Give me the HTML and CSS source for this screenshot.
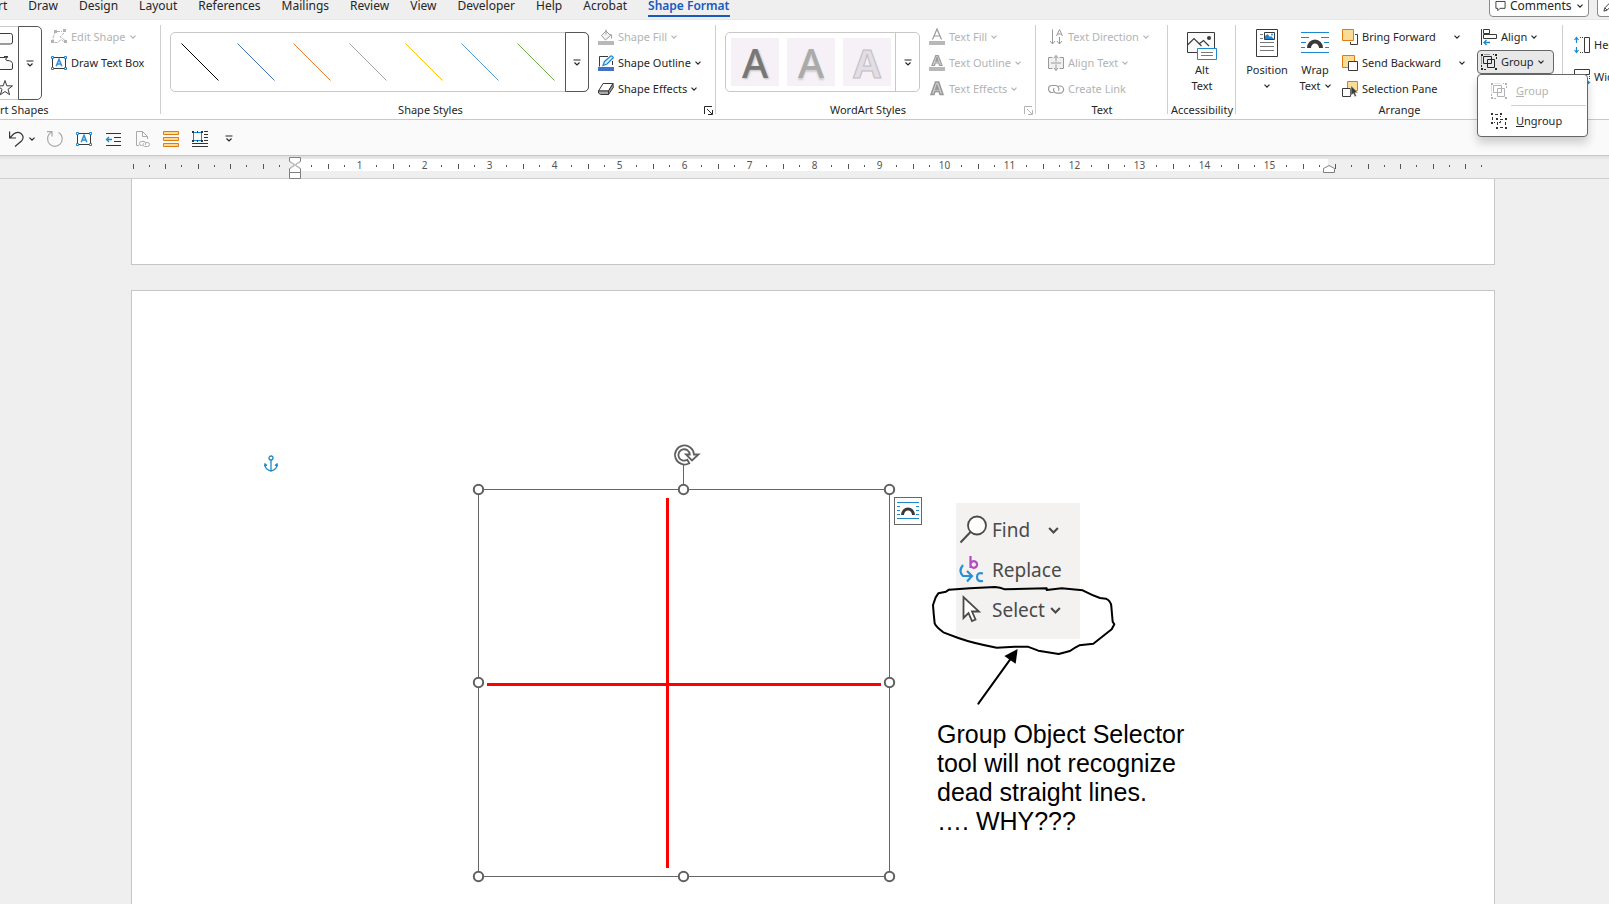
FILE: index.html
```
<!DOCTYPE html>
<html lang="en">
<head>
<meta charset="utf-8">
<title>Shape Format</title>
<link rel="stylesheet" href="styles.css">
</head>
<body>
<svg class="defs" aria-hidden="true">
  <symbol id="chev" viewBox="0 0 6 4"><path d="M.5.6 3 3.1 5.500.6" fill="none" stroke="currentColor" stroke-width="1.2"/></symbol>
  <symbol id="more" viewBox="0 0 8 7"><path d="M.5 1h7M1.500 3.500 4 6l2.500-2.500" fill="none" stroke="currentColor" stroke-width="1.2"/></symbol>
  <symbol id="launch" viewBox="0 0 9 9"><path d="M.5 8V.5H8M3 3l5 5M8.500 4v4.500H4" fill="none" stroke="currentColor"/></symbol>
  <symbol id="textbox" viewBox="0 0 16 16">
    <path d="M1.500 2.500h13v11h-13z" fill="#fff" stroke="#3b3b3b"/>
    <path d="M5.200 11.300 8 4.200l2.800 7.100M6.200 9h3.600" fill="none" stroke="#2b8fd3" stroke-width="1.5"/>
    <path d="M.5 1.500h2v2h-2zM13.500 1.500h2v2h-2zM.5 12.500h2v2h-2zM13.500 12.500h2v2h-2z" fill="#fff" stroke="#1f86cc"/>
  </symbol>
  <symbol id="wrap" viewBox="0 0 28 22">
    <path d="M0 .5h28M0 5.500h8M20 5.500h8M0 10.500h5M23 10.500h5M0 15.500h4M24 15.500h4M0 20.500h28" stroke="#1e88cf" fill="none"/>
    <path d="M8 16a6 6.500 0 0 1 12 0" fill="none" stroke="#3a3a3a" stroke-width="4"/>
  </symbol>
  <symbol id="corners" viewBox="0 0 16 16">
    <path d="M0 0h2v2H0zM14 0h2v2h-2zM0 14h2v2H0zM14 14h2v2h-2zM12 0h1v1h-1zM15 3h1v2h-1zM0 11h1v2H0zM3 15h2v1H3z" fill="currentColor"/>
    <path d="M2.500 2.500h8v7h-8zM6.500 5.500h7v8h-7z" fill="none" stroke="currentColor"/>
    <path d="M.5 2v8M3 .5h6" stroke="currentColor" stroke-opacity=".4"/>
  </symbol>
</svg>

<header class="tabs">
  <nav class="tab-list" aria-label="Ribbon tabs">
    <a class="tab" href="#">rt</a>
    <a class="tab" href="#">Draw</a>
    <a class="tab" href="#">Design</a>
    <a class="tab" href="#">Layout</a>
    <a class="tab" href="#">References</a>
    <a class="tab" href="#">Mailings</a>
    <a class="tab" href="#">Review</a>
    <a class="tab" href="#">View</a>
    <a class="tab" href="#">Developer</a>
    <a class="tab" href="#">Help</a>
    <a class="tab" href="#">Acrobat</a>
    <a class="tab active" href="#">Shape Format</a>
  </nav>
  <button class="pill"><svg class="i12" viewBox="0 0 12 12"><path d="M1 .5h10v7.500H5.500L3 10.500V8H1z" fill="#fff" stroke="#333"/></svg>Comments<svg class="chev end"><use href="#chev"/></svg></button>
  <button class="pill clipped" aria-label="Editing"><svg class="i12" viewBox="0 0 12 12"><path d="M1 11l1-3.500L9 .5l2.500 2.500-7 7z M2 7.500 4.500 10" fill="#fff" stroke="#333"/></svg></button>
</header>

<section class="ribbon">
  <div class="group g-insert">
    <div class="body">
      <div class="shapes">
        <svg class="shape-strip" viewBox="0 0 18 74"><path d="M0 .5h18M0 73.500h18" stroke="#c8c8c8"/><g fill="#fafafa" stroke="#3a3a3a"><path d="M-3 7.500H10.500a2 2 0 0 1 2 2V16a2 2 0 0 1-2 2H-3"/><path d="M-2 31.500H5.500q2 0 2.500-1H4M8 30.500q-4 3-1 4 5 0 5.500 3v4.500a1.500 1.500 0 0 1-1.500 1.500H0"/><path d="M5 54.500l1.800 5.300 5.700.1-4.500 3.400 1.600 5.400L5 65.500.4 68.700 2 63.300-2.500 59.900l5.700-.1z"/></g></svg>
        <button class="more dark" aria-label="More shapes"><svg class="dd"><use href="#more"/></svg></button>
      </div>
      <div class="cmds">
        <button class="cmd" disabled><svg class="i16" viewBox="0 0 16 16" fill="none" stroke="currentColor"><path d="M2 13V11q0-4 2.500-8M6 2.500h5M13 4l-4 4q5 2 5 5M3.500 13.500h3l4-3 3 3" stroke-dasharray="3 1"/><path d="M3 1h3v3H3zM12 0h3v3h-3zM0 11h3v3H0zM13 11h3v3h-3z" fill="currentColor" stroke="none"/></svg>Edit Shape<svg class="chev"><use href="#chev"/></svg></button>
        <button class="cmd"><svg class="i16"><use href="#textbox"/></svg>Draw Text Box</button>
      </div>
    </div>
    <div class="label start">rt Shapes</div>
  </div>

  <div class="group g-styles">
    <div class="body">
      <div class="gallery">
        <button class="style" aria-label="Black line"><svg viewBox="0 0 38 38"><path d="M.5.500l37 37" stroke="#000"/></svg></button>
        <button class="style" aria-label="Blue line"><svg viewBox="0 0 38 38"><path d="M.5.500l37 37" stroke="#4472c4"/></svg></button>
        <button class="style" aria-label="Orange line"><svg viewBox="0 0 38 38"><path d="M.5.500l37 37" stroke="#ed7d31"/></svg></button>
        <button class="style" aria-label="Grey line"><svg viewBox="0 0 38 38"><path d="M.5.500l37 37" stroke="#a5a5a5"/></svg></button>
        <button class="style" aria-label="Gold line"><svg viewBox="0 0 38 38"><path d="M.5.500l37 37" stroke="#ffc000"/></svg></button>
        <button class="style" aria-label="Light blue line"><svg viewBox="0 0 38 38"><path d="M.5.500l37 37" stroke="#5b9bd5"/></svg></button>
        <button class="style" aria-label="Green line"><svg viewBox="0 0 38 38"><path d="M.5.500l37 37" stroke="#70ad47"/></svg></button>
        <button class="more dark" aria-label="More shape styles"><svg class="dd"><use href="#more"/></svg></button>
      </div>
      <div class="cmds">
        <button class="cmd" disabled><svg class="i16" viewBox="0 0 16 16"><path d="M3.500 6.500 8 2l4.500 4.500-5 4.500zM8 .5v5M12 5.500q2-1.500 1.500 4" fill="#f3f3f3" stroke="#9a9a9a"/><path d="M0 12h16v4H0z" fill="#b8b8b8"/></svg>Shape Fill<svg class="chev"><use href="#chev"/></svg></button>
        <button class="cmd"><svg class="i16" viewBox="0 0 16 16"><path d="M10 1.500H1.500v10M14.500 6v4" fill="none" stroke="#3a3a3a"/><path d="M5 10.500 6.500 6.500 13 .8q2 0 2.300 2L9 9z" fill="#d9effc" stroke="#1e88cf" stroke-width="1.3"/><path d="M0 12h16v4H0z" fill="#4472c4"/></svg>Shape Outline<svg class="chev"><use href="#chev"/></svg></button>
        <button class="cmd"><svg class="i16" viewBox="0 0 16 16" stroke="#3a3a3a" stroke-linejoin="round"><path d="M5 2.500h10l-4.500 7.500H.5z" fill="#fff"/><path d="M.5 10h10v3.500H2.500L.5 12z" fill="#aaa"/><path d="M10.500 10 15 2.500l.3 4-4.800 7z" fill="#999"/></svg>Shape Effects<svg class="chev"><use href="#chev"/></svg></button>
      </div>
    </div>
    <div class="label has-launch">Shape Styles<button class="launch" aria-label="Shape style settings"><svg><use href="#launch"/></svg></button></div>
  </div>

  <div class="group g-wordart">
    <div class="body">
      <div class="gallery art">
        <button class="letter one">A</button>
        <button class="letter two">A</button>
        <button class="letter three">A</button>
        <button class="more" aria-label="More WordArt styles"><svg class="dd"><use href="#more"/></svg></button>
      </div>
      <div class="cmds">
        <button class="cmd" disabled><svg class="i16" viewBox="0 0 16 16"><path d="M3.500 10.500 8 0l4.500 10.500M5 7h6" fill="none" stroke="#999" stroke-width="1.2"/><path d="M0 12h16v4H0z" fill="#b8b8b8"/></svg>Text Fill<svg class="chev"><use href="#chev"/></svg></button>
        <button class="cmd" disabled><svg class="i16" viewBox="0 0 16 16"><path d="M3 10.500 6.800.5h2.400l3.800 10h-2.500L9.800 8H6.200l-.7 2.500zM6.800 6.200 8 2.500l1.200 3.700z" fill="#ddd" stroke="#999" stroke-width="1.2"/><path d="M0 12h16v4H0z" fill="#b8b8b8"/></svg>Text Outline<svg class="chev"><use href="#chev"/></svg></button>
        <button class="cmd" disabled><svg class="i16" viewBox="0 0 16 16"><path d="M2 13.500 6.500 1h3.200l4.300 12.500h-3l-1-3H6l-1 3zM6.800 8.200 8 4.500l1.300 3.700z" fill="#ccc" stroke="#999" stroke-width="1.500"/></svg>Text Effects<svg class="chev"><use href="#chev"/></svg></button>
      </div>
    </div>
    <div class="label has-launch">WordArt Styles<button class="launch" disabled aria-label="Text effect settings"><svg><use href="#launch"/></svg></button></div>
  </div>

  <div class="group g-text">
    <div class="body">
      <div class="cmds">
        <button class="cmd" disabled><svg class="i16" viewBox="0 0 16 16" fill="none" stroke="#999"><path d="M4.500.5v14M2 12l2.500 3L7 12M11.500 8v7M9 12l2.500 3 2.500-3M8.500 7l3-6.500 3 6.500M9.500 5h4"/></svg>Text Direction<svg class="chev"><use href="#chev"/></svg></button>
        <button class="cmd" disabled><svg class="i16" viewBox="0 0 16 16" fill="none" stroke="#999"><path d="M1 2.500h14v11H1z" fill="#f0f0f0" stroke="none"/><path d="M4.500 2.500h-4v11h4M11.500 2.500h4v11h-4M3 8h10M8 .5v6M6 3l2-2.500L10 3M8 9.500v6M6 13l2 2.500 2-2.500"/></svg>Align Text<svg class="chev"><use href="#chev"/></svg></button>
        <button class="cmd" disabled><svg class="i16" viewBox="0 0 16 16" fill="none" stroke="#999" stroke-width="1.200"><path d="M5.500 11.500H4a3.500 3.500 0 0 1 0-7h3.500a3.500 3.500 0 0 1 3 5.200M10.500 5h1.500a3.600 3.600 0 0 1 0 7.200H9a3.500 3.500 0 0 1-3-5.200"/></svg>Create Link</button>
      </div>
    </div>
    <div class="label">Text</div>
  </div>

  <div class="group g-access">
    <div class="body">
      <button class="big"><svg class="i30" viewBox="0 0 30 28"><path d="M.5.500h27v20H.5z" fill="#fafafa" stroke="#3a3a3a"/><path d="M.5 13 7 6.500l7.500 7.500M12 12l4.500-3.500L22 14" fill="none" stroke="#3a3a3a" stroke-width="1.2"/><circle cx="22" cy="6" r="2" fill="#3a3a3a"/><path d="M10.500 16.500h19v11h-19z" fill="#fff" stroke="#1e88cf"/><path d="M14 20.500h12M14 23.500h12" stroke="#777"/></svg><span>Alt</span><span>Text</span></button>
    </div>
    <div class="label">Accessibility</div>
  </div>

  <div class="group g-arrange">
    <div class="body">
      <button class="big"><svg class="i30" viewBox="0 0 30 28"><path d="M4.500.500h21v27h-21z" fill="#fff" stroke="#3a3a3a"/><path d="M8 5.500h3M8 9.500h3M8 13.500h14M8 17.500h14M8 21.500h14" stroke="#777"/><path d="M12.500 3.500h10v7h-10z" fill="#fff" stroke="#3a3a3a"/><path d="M13 10V7l2.500-2 2.500 3 1-1 3 3z" fill="#1e88cf"/><circle cx="20" cy="5.500" r="1" fill="#1e88cf"/></svg><span>Position</span><span><svg class="chev"><use href="#chev"/></svg></span></button>
      <button class="big"><svg class="i30" viewBox="-1 -3 30 28"><use href="#wrap" width="28" height="22"/></svg><span>Wrap</span><span>Text<svg class="chev"><use href="#chev"/></svg></span></button>
      <div class="cmds wide">
        <button class="cmd split"><svg class="i16" viewBox="0 0 16 16"><path d="M.5.500h11v11H.5z" fill="#fadc95" stroke="#e07b12"/><path d="M13 5.500h2.500v10h-7V13" fill="none" stroke="#3a3a3a"/></svg>Bring Forward<svg class="chev"><use href="#chev"/></svg></button>
        <button class="cmd split"><svg class="i16" viewBox="0 0 16 16"><path d="M.5.500h12v12H.5z" fill="#fadc95" stroke="#e07b12"/><path d="M6.500 6.500h9v9h-9z" fill="#fff" stroke="#3a3a3a"/></svg>Send Backward<svg class="chev"><use href="#chev"/></svg></button>
        <button class="cmd"><svg class="i16" viewBox="0 0 16 16"><path d="M5.500.500h10v9h-10z" fill="#fadc95" stroke="#e07b12"/><path d="M.5 7.500h8v8h-8z" fill="#fff" stroke="#3a3a3a"/><path d="M9 4.500v10l2.300-2 1.500 3.200 1.700-.8-1.500-3.100h3z" fill="#3a3a3a" stroke="#fff" stroke-width=".5"/></svg>Selection Pane</button>
      </div>
      <div class="cmds align">
        <button class="cmd inset"><svg class="i16" viewBox="0 0 16 16" fill="none" stroke="#3a3a3a"><path d="M.5 0v16M2.500.500h6v4h-6zM2.500 5.500h13v4h-13z" /><path d="M9 13.500H3M5.500 11 3 13.500 5.500 16" stroke="#1e88cf" stroke-width="1.300"/></svg>Align<svg class="chev"><use href="#chev"/></svg></button>
        <div class="menu-host">
          <button class="cmd inset open" aria-haspopup="menu" aria-expanded="true"><svg class="i16"><use href="#corners"/></svg>Group<svg class="chev"><use href="#chev"/></svg></button>
          <div class="menu" role="menu">
            <button class="item" role="menuitem" disabled><svg class="i16"><use href="#corners"/></svg><span><u>G</u>roup</span></button>
            <hr>
            <button class="item" role="menuitem"><svg class="i16" viewBox="0 0 16 16"><path d="M0 0h2v2H0zM9 0h2v2H9zM0 9h2v2H0zM5 5h2v2H5zM14 5h2v2h-2zM5 14h2v2H5zM14 14h2v2h-2z" fill="#333"/><path d="M4 1.500h3M1.500 4v3M9.500 3v1M3 9.500h1M9 6.500h3M6.500 9v3M9 14.500h3M14.500 9v3M8 9.500h1.500V8" fill="none" stroke="#333"/></svg><span><u>U</u>ngroup</span></button>
          </div>
        </div>
      </div>
    </div>
    <div class="label">Arrange</div>
  </div>

  <div class="group g-size">
    <div class="size-rows">
      <label class="size"><svg class="i16" viewBox="0 0 16 16" fill="none"><path d="M2.500 1v5M2.500 10v5M.5 3l2-2.500 2 2.500M.5 13l2 2.500 2-2.500" stroke="#1e88cf" stroke-width="1.200"/><path d="M6 .5h3M6 15.500h3" stroke="#3a3a3a" stroke-dasharray="1 1"/><path d="M10.500.500h5v15h-5z" stroke="#3a3a3a"/></svg>Height</label>
      <label class="size"><svg class="i16" viewBox="0 0 16 16" fill="none"><path d="M.5.500h15v5H.5z" stroke="#3a3a3a"/><path d="M.5 7v3M15.500 7v3" stroke="#3a3a3a" stroke-dasharray="1 1"/><path d="M1 13.500h14M3 11.500.5 13.500l2.500 2M13 11.500l2.500 2-2.500 2" stroke="#1e88cf" stroke-width="1.200"/></svg>Width</label>
    </div>
  </div>
</section>

<div class="qat">
  <button class="tool undo" aria-label="Undo"><svg class="i16" viewBox="0 0 16 16" fill="none" stroke="#333" stroke-width="1.200"><path d="M.6.500v6.500H7M1 6.800 4.500 3q4-3 7.500-.5 4 3.500.5 7.500L6 15.500"/></svg><svg class="chev"><use href="#chev"/></svg></button>
  <button class="tool" disabled aria-label="Redo"><svg class="i16" viewBox="0 0 16 16" fill="none" stroke="#a8a8a8" stroke-width="1.200"><path d="M0 .6h5v5M5 1Q.6 3 .6 8a7.300 7.300 0 0 0 14.600 0q0-4.500-3.700-6.500"/></svg></button>
  <button class="tool" aria-label="Draw text box"><svg class="i16"><use href="#textbox"/></svg></button>
  <button class="tool" aria-label="Decrease indent"><svg class="i16" viewBox="0 0 16 16" fill="none"><path d="M1 2.500h15M9 6.500h7M9 10.500h7M1 14.500h15" stroke="#333" stroke-width="1.200"/><path d="M7 8.500H1.500M4 6 1.500 8.500 4 11" stroke="#1e88cf" stroke-width="1.300"/></svg></button>
  <button class="tool" disabled aria-label="Link document"><svg class="i16" viewBox="0 0 16 16" fill="none" stroke="#aaa"><path d="M5 14.500H2.500v-14h6l5 5V8M8.500.500v5h5"/><path d="M8.500 14.500H7.500a2 2 0 0 1 0-4h2.500a2 2 0 0 1 1 3.500M11.500 11.500h2a2 2 0 0 1 0 4h-3a2 2 0 0 1-1-3.200"/></svg></button>
  <button class="tool" aria-label="Paragraph spacing"><svg class="i16" viewBox="0 0 16 16"><path d="M.5.500h15v3H.5zM.5 6.500h15v3H.5zM.5 12.500h15v3H.5z" fill="#fadc95" stroke="#e07b12"/></svg></button>
  <button class="tool" aria-label="Wrap square"><svg class="i16" viewBox="0 0 16 16" fill="none"><path d="M12 .5h4M12 3.500h4M12 6.500h4M12 9.500h4M0 12.500h16M0 15.500h16" stroke="#333" stroke-width="1.200"/><path d="M1.500 1.500h8v8h-8z" stroke="#1e88cf"/><path d="M0 0h2v2H0zM9 0h2v2H9zM0 9h2v2H0zM9 9h2v2H9zM5 0h1v2H5zM5 9h1v2H5z" fill="#333"/></svg></button>
  <button class="tool customize" aria-label="Customize toolbar"><svg class="dd"><use href="#more"/></svg></button>
</div>

<div class="ruler">
  <div class="ruler-white"></div>
  <div class="scale">
    <i></i><i></i><i class="half"></i><span>1</span><span>2</span><span>3</span><span>4</span><span>5</span><span>6</span><span>7</span><span>8</span><span>9</span><span>10</span><span>11</span><span>12</span><span>13</span><span>14</span><span>15</span><i></i><i></i><i></i>
  </div>
  <svg class="indent-left" viewBox="0 0 12 22"><path d="M.5.500h11v4L6 8 .5 4.500z" fill="#fff" stroke="#808080"/><path d="M.5 15.500v-4L6 8l5.500 3.500v4zM.5 15.500h11v6H.5z" fill="#fff" stroke="#808080"/><path d="M1 4.500 11 11.500M11 4.500 1 11.500" stroke="#c4c4c4" stroke-width="1.300"/></svg>
  <svg class="indent-right" viewBox="0 0 12 8"><path d="M.5 7.500v-4L6 .5l5.500 3v4z" fill="#fff" stroke="#808080"/></svg>
</div>

<main class="workspace">
  <div class="page previous"></div>
  <div class="page current">
    <svg class="anchor" viewBox="0 0 14 18" fill="none" stroke="#1f8acb" stroke-width="1.300"><circle cx="7" cy="3" r="2"/><path d="M7 5v11M1 9.500q0 5 6 6.500 6-1.500 6-6.500M.5 11.500 1 9l2 1.500M13.500 11.500 13 9l-2 1.500"/></svg>

    <svg class="selection" viewBox="466 440 436 450">
      <path d="M478.500 489.500h411v387h-411zM683.500 489.500v-26" fill="none" stroke="#666"/>
      <path d="M667.500 498v370M487 684.500h394" stroke="#f00" stroke-width="3" fill="none"/>
      <g fill="#fff" stroke="#606060" stroke-width="2"><circle cx="478.500" cy="489.500" r="4.700"/><circle cx="683.500" cy="489.500" r="4.700"/><circle cx="889.500" cy="489.500" r="4.700"/><circle cx="478.500" cy="682.500" r="4.700"/><circle cx="889.500" cy="682.500" r="4.700"/><circle cx="478.500" cy="876.500" r="4.700"/><circle cx="683.500" cy="876.500" r="4.700"/><circle cx="889.500" cy="876.500" r="4.700"/></g>
      <path d="M694 454.500a9.500 9.500 0 1 0-4.700 8.700l-2-3.500a5.700 5.700 0 1 1 2.500-5.200h-3.800l6 6 6.500-6z" fill="#fff" stroke="#606060" stroke-width="1.800"/>
    </svg>

    <button class="layout-options" aria-label="Layout options"><svg viewBox="0 0 22 18"><path d="M0 .5h22M0 4.500h3M19 4.500h3M0 8.500h3M19 8.500h3M0 12.500h3M19 12.500h3M0 16.500h22" stroke="#1e88cf" fill="none"/><path d="M5.500 13a5.500 6 0 0 1 11 0" fill="none" stroke="#3a3a3a" stroke-width="3"/></svg></button>

    <div class="clip">
      <div class="clip-row"><svg class="i28" viewBox="0 0 28 28"><circle cx="18" cy="9.500" r="9" fill="#fff" stroke="#4a4a4a" stroke-width="1.800"/><path d="M11.500 16 1.500 26.500" stroke="#4a4a4a" stroke-width="2"/></svg><span>Find</span><svg class="chev large gap"><use href="#chev"/></svg></div>
      <div class="clip-row"><svg class="i28" viewBox="0 0 28 28"><g fill="none" stroke-width="2.200"><path d="M11.500 0v12M11.500 8a3.300 3.300 0 1 1 0 1" stroke="#b44bc0"/><path d="M24 17.500q-6-1.500-6 3.500t6 4" stroke="#2b8fd3"/><path d="M4 9q-5 6 0 11h8M8 15l5 5-5 5.500" stroke="#2b8fd3"/></g></svg><span>Replace</span></div>
      <div class="clip-row"><svg class="i28" viewBox="0 0 28 28"><path d="M4.500 1v21l5-5 3.500 8 3.500-1.500-3.500-8h7z" fill="#fff" stroke="#4a4a4a" stroke-width="1.800"/></svg><span>Select</span><svg class="chev large"><use href="#chev"/></svg></div>
    </div>

    <svg class="ink" viewBox="0 0 960 720" fill="none" stroke="#000" stroke-width="6" stroke-linejoin="round" stroke-linecap="round">
      <path d="M147 329 210 325 285 321Q300 322 315 328L440 325 440 330 485 325 548 331Q575 345 600 354L618 356Q634 364 634 380L638 425 643 433 635 448 580 491 538 496Q520 505 510 513L476 522 415 512 383 500 345 500 290 503Q220 490 175 474L130 457Q108 440 104 430L101 400 99 375 107 352 115 340 138 335 147 329"/>
      <path d="M235 671 335 532"/><path d="M353 507 313 528 347 551z" fill="#000" stroke="none"/>
    </svg>

    <p class="note">Group Object Selector<br>tool will not recognize<br>dead straight lines.<br>…. WHY???</p>
  </div>
</main>
</body>
</html>
```
FILE: styles.css
```
* { box-sizing: border-box; }
html, body { height: 100%; margin: 0; }
body {
  display: flex;
  flex-direction: column;
  overflow: hidden;
  background: #efefef;
  color: #262626;
  font: 11px/16px "Noto Sans", "Open Sans", sans-serif;
}
svg { flex: none; display: block; overflow: visible; }
button {
  margin: 0;
  padding: 0;
  border: 0;
  background: none;
  color: inherit;
  font: inherit;
}
button:disabled { color: #b3b3b3; }
.defs { position: absolute; width: 0; height: 0; }
.chev { width: 6px; height: 4px; }
.dd { width: 8px; height: 7px; }
.i12 { width: 11px; height: 11px; }
.i16 { width: 16px; height: 16px; }
.i28 { width: 28px; height: 28px; }
.i30 { width: 30px; height: 28px; }

/* Tab strip */
.tabs {
  display: flex;
  flex: none;
  align-items: flex-end;
  height: 20px;
  padding-bottom: 2px;
  overflow: hidden;
  gap: 8px;
  font-size: 12px;
  border-bottom: 1px solid #e6e6e6;
}
.tab-list { display: flex; flex: 1; gap: 21px; margin-left: -2px; }
.tab {
  color: inherit;
  line-height: 18px;
  text-decoration: none;
  white-space: nowrap;
  border-bottom: 2px solid transparent;
}
.tab.active { color: #185abd; border-color: #185abd; font-weight: 600; }
.pill {
  display: flex;
  flex: none;
  align-items: center;
  gap: 4px;
  width: 100px;
  height: 22px;
  padding: 0 5px;
  border: 1px solid #8a8a8a;
  border-radius: 4px;
  background: #fff;
}
.pill .end { margin-left: auto; }
.pill.clipped { width: 12px; border-right: 0; border-radius: 4px 0 0 4px; }

/* Ribbon */
.ribbon {
  display: flex;
  flex: none;
  height: 100px;
  background: #fff;
  border-bottom: 1px solid #c8c8c8;
}
.group {
  position: relative;
  display: flex;
  flex: none;
  flex-direction: column;
  padding-top: 3px;
}
.group::after {
  content: "";
  position: absolute;
  top: 5px;
  right: 0;
  bottom: 5px;
  width: 1px;
  background: #cfcfcf;
}
.g-insert { width: 161px; }
.g-styles { width: 555px; padding-left: 9px; }
.g-wordart { width: 320px; padding-left: 9px; }
.g-text { width: 132px; }
.g-access { width: 68px; }
.g-arrange { width: 327px; }
.g-size { flex: 1 1 0; min-width: 0; }
.g-size::after { display: none; }
.body { display: flex; height: 78px; align-items: flex-start; }
.label {
  height: 18px;
  line-height: 17px;
  text-align: center;
  white-space: nowrap;
}
.g-styles .label, .g-wordart .label { margin-left: -9px; }
.label.start { text-align: left; }
.label.has-launch { padding-right: 16px; }
.launch { position: absolute; right: 3px; bottom: 4px; }
.launch svg { width: 9px; height: 9px; }
.cmds { display: flex; flex-direction: column; padding-top: 1px; padding-left: 9px; }
.cmd {
  display: flex;
  align-items: center;
  gap: 4px;
  height: 26px;
  white-space: nowrap;
}
.g-text .cmds { padding-left: 12px; }
.cmds.wide { width: 138px; padding-left: 3px; }
.cmd.split .chev { margin-left: 14px; }
.cmds.align { padding-left: 0; }
.cmd.inset { padding-left: 4px; }
.cmd.open {
  width: 77px;
  height: 24px;
  padding-left: 3px;
  border: 1px solid #666;
  border-radius: 4px;
  background: #e8e8e8;
}
.shapes { display: flex; height: 74px; margin-top: 3px; }
.shape-strip { width: 18px; height: 74px; }
.more {
  display: flex;
  align-items: center;
  justify-content: center;
  width: 24px;
  border-left: 1px solid #c8c8c8;
}
.more.dark { border: 1px solid #555; border-radius: 0 5px 5px 0; }
.gallery {
  display: flex;
  height: 60px;
  margin-top: 9px;
  border: 1px solid #c8c8c8;
  border-radius: 5px;
  padding-left: 1px;
}
.gallery .more.dark { margin: -1px; margin-left: 1px; }
.style { display: grid; place-items: center; width: 56px; }
.style svg { width: 38px; height: 38px; stroke-width: 1; }
.gallery.art { align-items: center; gap: 8px; padding-left: 5px; }
.art .more { height: 100%; margin-left: -4px; }
.letter {
  width: 48px;
  height: 48px;
  background: #f5f1f7;
  color: #777;
  font: 500 40px/50px "Noto Sans", sans-serif;
  text-shadow: 1px 1px 2px #bbb;
}
.letter.two { color: #aaa; text-shadow: 0 2px 2px #ccc; }
.letter.three { color: #e3dde4; font-weight: 700; text-shadow: none; -webkit-text-stroke: 1px #c2bcc4; }
.big {
  display: flex;
  flex-direction: column;
  align-items: center;
  width: 48px;
  padding-top: 6px;
}
.g-access .body { justify-content: center; }
.g-access .big { padding-top: 9px; }
.g-access .big svg { margin-bottom: 2px; }
.g-arrange .body { padding-left: 7px; }
.big > svg { margin-bottom: 5px; }
.big span { display: flex; align-items: center; justify-content: center; gap: 4px; height: 16px; }
.size-rows { display: flex; flex-direction: column; padding: 6px 0 0 11px; overflow: hidden; }
.size { display: flex; align-items: center; gap: 4px; height: 32px; }

/* Group drop-down */
.menu-host { position: relative; }
.menu {
  position: absolute;
  z-index: 5;
  top: 24px;
  left: 0;
  display: flex;
  flex-direction: column;
  width: 111px;
  padding: 1px;
  border: 1px solid #666;
  border-radius: 4px;
  background: #fff;
  box-shadow: 0 6px 10px rgba(0, 0, 0, .18);
}
.menu hr { align-self: stretch; height: 1px; margin: 0 0 0 32px; border: 0; background: #d0d0d0; }
.item { display: flex; align-items: center; gap: 9px; height: 29px; padding-left: 12px; }

/* Quick access toolbar */
.qat {
  display: flex;
  flex: none;
  align-items: center;
  gap: 13px;
  height: 36px;
  padding-top: 2px;
  padding-left: 9px;
  background: #fafafa;
  border-bottom: 1px solid #c8c8c8;
}
.tool { display: flex; align-items: center; }
.tool.undo { gap: 4px; width: 25px; }
.tool.customize { padding-left: 4px; }

/* Ruler */
.ruler {
  position: relative;
  flex: none;
  height: 23px;
  padding: 0 114px 0 133px;
  border-bottom: 1px solid #d0d0d0;
  background: linear-gradient(#dedede, #efefef 4px);
  color: #555;
}
.ruler-white {
  position: absolute;
  top: 3px;
  right: 281px;
  left: 296px;
  height: 12px;
  background: #fff;
}
.scale { position: relative; display: flex; height: 18px; overflow: hidden; }
.scale > * {
  flex: none;
  width: 65px;
  padding-right: 2px;
  line-height: 18px;
  font-size: 10px;
  font-style: normal;
  text-align: center;
  background:
    linear-gradient(#555, #555) 0 8px / 1px 5px no-repeat,
    linear-gradient(#555, #555) 16px 9px / 1px 2px no-repeat,
    linear-gradient(#555, #555) 48px 9px / 1px 2px no-repeat;
}
.scale > i {
  background:
    linear-gradient(#555, #555) 0 8px / 1px 5px no-repeat,
    linear-gradient(#555, #555) 16px 9px / 1px 2px no-repeat,
    linear-gradient(#555, #555) 32px 8px / 1px 5px no-repeat,
    linear-gradient(#555, #555) 48px 9px / 1px 2px no-repeat;
}
.scale > .half {
  background:
    linear-gradient(#555, #555) 0 8px / 1px 5px no-repeat,
    linear-gradient(#555, #555) 16px 9px / 1px 2px no-repeat,
    linear-gradient(#555, #555) 48px 9px / 1px 2px no-repeat;
}
.indent-left { position: absolute; top: 1px; left: 289px; width: 12px; height: 22px; }
.indent-right { position: absolute; top: 9px; right: 274px; width: 12px; height: 8px; }

/* Document */
.workspace {
  display: flex;
  flex: 1;
  flex-direction: column;
  gap: 25px;
  min-height: 0;
  padding: 0 114px 0 131px;
  overflow: hidden;
}
.page { border: 1px solid #c6c6c6; background: #fff; }
.page.previous { flex: none; height: 86px; border-top: 0; }
.page.current { position: relative; flex: 1; border-bottom: 0; }
.page.current > * { position: absolute; }
.anchor { top: 164px; left: 132px; width: 14px; height: 18px; }
.selection { top: 149px; left: 334px; width: 436px; height: 450px; }
.layout-options {
  top: 206px;
  left: 762px;
  display: grid;
  place-items: center;
  width: 28px;
  height: 28px;
  border: 1px solid #666;
  background: #fff;
}
.layout-options svg { width: 22px; height: 18px; }
.clip {
  top: 212px;
  left: 824px;
  width: 124px;
  height: 136px;
  padding: 7px 0 0 3px;
  background: #f3f2f1;
  color: #4a4a4a;
  font-size: 19px;
}
.clip-row { display: flex; align-items: center; gap: 5px; height: 40px; }
.chev.large { width: 11px; height: 7px; }
.chev.gap { margin-left: 13px; }
.ink { top: 189px; left: 768px; width: 320px; height: 240px; }
.note {
  top: 429px;
  left: 805px;
  margin: 0;
  color: #000;
  font: 25px/29px "Liberation Sans", Arial, sans-serif;
  white-space: nowrap;
}
```
